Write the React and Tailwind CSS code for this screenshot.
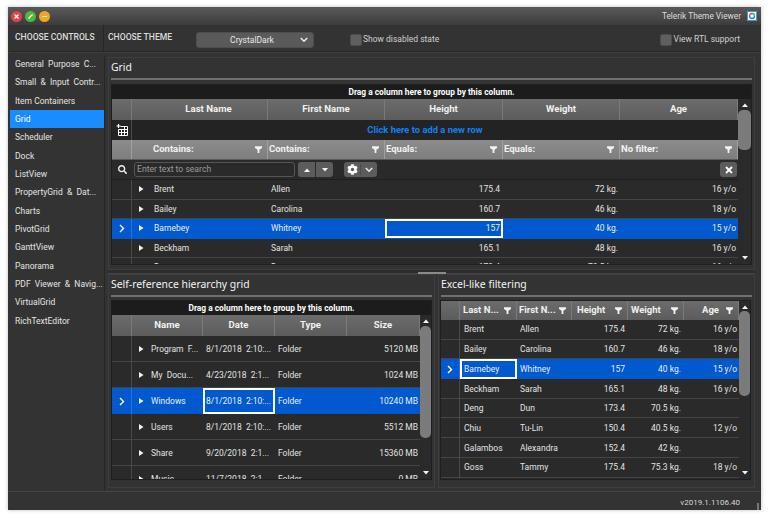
import React from "react";
import { FaCog, FaSearch } from "react-icons/fa";

const Funnel = () => (
  <svg width="7" height="7" viewBox="0 0 7 7" className="shrink-0"><path d="M0 .3h7v1.7L4.4 3.8V7H2.6V3.8L0 2z" fill="#f2f2f2" /></svg>
);
const Tri = ({ dir = "right", size = 6 }) => (
  <svg width={size} height={size} viewBox="0 0 6 6" className="shrink-0">
    {dir === "right" && <path d="M1 0l4.5 3L1 6z" fill="#f4f4f4" />}
    {dir === "up" && <path d="M0 5l3-3.5L6 5z" fill="#f4f4f4" />}
    {dir === "down" && <path d="M0 1l3 3.5L6 1z" fill="#f4f4f4" />}
  </svg>
);
const Chevron = ({ className = "" }) => (
  <svg width="8" height="6" viewBox="0 0 8 6" className={className}><path d="M.8 1l3.2 3.2L7.2 1" stroke="#e8e8e8" strokeWidth="1.6" fill="none" /></svg>
);
const RowArrow = () => (
  <svg width="6" height="9" viewBox="0 0 6 9"><path d="M1 1l3.5 3.5L1 8" stroke="#fff" strokeWidth="1.4" fill="none" /></svg>
);
const TableIcon = () => (
  <svg width="12" height="12" viewBox="0 0 12 12">
    <path d="M2.5 0v4M.5 2h4" stroke="#fff" strokeWidth="1.2" />
    <path d="M4.5 2.5h7v9h-9v-6h9M5.5 5.5v6M8.5 2.5v9M2.5 8.5h9" stroke="#fff" strokeWidth="1" fill="none" />
  </svg>
);

const Scroll = ({ thumbTop, thumbH }) => (
  <div className="flex-1 min-w-0 bg-[#2a2a2a] relative flex flex-col items-center justify-between py-[3px]">
    <Tri dir="up" />
    <Tri dir="down" />
    <div className="absolute left-0 right-0 rounded-[5px] bg-[#7b7b7b]" style={{ top: thumbTop, height: thumbH }} />
  </div>
);

const Panel = ({ title, className = "", compact, children }) => (
  <section className={"flex flex-col bg-[#333333] border border-[#3e3e3e] " + className}>
    <h2 className="h-[20px] pl-[2px] pt-[1px] text-[10.4px] leading-[16px] font-normal text-[#f4f4f4] [font-family:'Noto_Sans',sans-serif] whitespace-nowrap">{title}</h2>
    <div className={"h-[2px] mx-[2px] bg-[#707070] " + (compact ? "mb-[3px]" : "mb-[4px]")} />
    {children}
  </section>
);

const GroupBar = () => (
  <div className="h-[14px] shrink-0 bg-[#1c1c1c] text-center text-white font-bold text-[8.4px] leading-[14px]">Drag a column here to group by this column.</div>
);

const cellBase = "flex items-center min-w-0 whitespace-nowrap overflow-hidden";

const top = "grid grid-cols-[20px_136px_117px_118px_117px_118px]";
const left = "grid grid-cols-[20px_71px_72px_72px_73px]";
const right = "grid grid-cols-[19px_57px_55px_56px_56px_55px]";

const HeadCell = ({ children, indent }) => (
  <div className={cellBase + " justify-center font-bold text-[9.6px] text-[#f0f0f0] border-r border-[#7a7a7a] " + (indent ? "pl-[18px]" : "")}>{children}</div>
);

const DataCell = ({ children, align = "left", sel, pl = "pl-[3px]", pr = "pr-[2px]" }) => (
  <div className={cellBase + " " + (align === "right" ? "justify-end " + pr : pl) + (sel ? " border-2 border-white" : "")}>{children}</div>
);

const Indicator = ({ selected }) => (
  <div className={"flex items-center justify-center border-r " + (selected ? "border-[#2b72d6]" : "border-[#4a4a4a]")}>
    {selected && <RowArrow />}
  </div>
);

const topRows = [
  ["Brent", "Allen", "175.4", "72 kg.", "16 y/o"],
  ["Bailey", "Carolina", "160.7", "46 kg.", "18 y/o"],
  ["Barnebey", "Whitney", "157", "40 kg.", "15 y/o"],
  ["Beckham", "Sarah", "165.1", "48 kg.", "16 y/o"],
  ["Deng", "Dun", "173.4", "70.5 kg.", "16 y/o"],
];

const leftRows = [
  ["Program  F...", "8/1/2018  2:10:...", "Folder", "5120 MB"],
  ["My  Docu...", "4/23/2018  2:1...", "Folder", "1024 MB"],
  ["Windows", "8/1/2018  2:10:...", "Folder", "10240 MB"],
  ["Users", "8/1/2018  2:10:...", "Folder", "5512 MB"],
  ["Share", "9/20/2018  2:1...", "Folder", "15360 MB"],
  ["Music", "11/7/2018  2:1...", "Folder", "0 MB"],
];

const rightRows = [
  ["Brent", "Allen", "175.4", "72 kg.", "16 y/o"],
  ["Bailey", "Carolina", "160.7", "46 kg.", "18 y/o"],
  ["Barnebey", "Whitney", "157", "40 kg.", "15 y/o"],
  ["Beckham", "Sarah", "165.1", "48 kg.", "16 y/o"],
  ["Deng", "Dun", "173.4", "70.5 kg.", ""],
  ["Chiu", "Tu-Lin", "150.4", "40.5 kg.", "12 y/o"],
  ["Galambos", "Alexandra", "152.4", "42 kg.", ""],
  ["Goss", "Tammy", "175.4", "75.3 kg.", "18 y/o"],
];

const sideItems = ["General  Purpose  C...", "Small  &  Input  Contr...", "Item Containers", "Grid", "Scheduler", "Dock", "ListView", "PropertyGrid  &  Dat...", "Charts", "PivotGrid", "GanttView", "Panorama", "PDF  Viewer  &  Navig...", "VirtualGrid", "RichTextEditor"];

const TopGrid = () => (
  <div className="h-[181px] mx-[2px] overflow-hidden border border-[#1f1f1f] bg-[#2a2a2a] flex flex-col">
    <GroupBar />
    <div className="flex flex-1 min-h-0">
      <div className="w-[626px] shrink-0 flex flex-col overflow-hidden">
        <div className={top + " h-[21px] shrink-0 bg-gradient-to-b from-[#6c6c6c] to-[#5c5c5c]"}>
          <div className="border-r border-[#7a7a7a]" />
          {["Last Name", "First Name", "Height", "Weight", "Age"].map((h, i) => <HeadCell key={h} indent={i === 0}>{h}</HeadCell>)}
        </div>
        <div className="relative h-[20px] shrink-0 bg-[#232323] text-center font-bold text-[9.4px] leading-[20px] text-[#0f82f2]">
          <div className="absolute left-0 top-0 bottom-0 w-[20px] flex items-center justify-center border-r border-[#4a4a4a]"><TableIcon /></div>
          Click here to add a new row
        </div>
        <div className={top + " h-[20px] shrink-0 bg-gradient-to-b from-[#8c8c8c] to-[#7e7e7e] border-b border-[#5a5a5a]"}>
          <div className="border-r border-[#a0a0a0]" />
          {["Contains:", "Contains:", "Equals:", "Equals:", "No filter:"].map((h, i) => (
            <div key={i} className={"flex items-center justify-between pr-[5px] font-bold text-[9.5px] text-[#f2f2f2] border-r border-[#a0a0a0] " + (i === 0 ? "pl-[21px]" : "pl-[1px]")}>
              <span>{h}</span><Funnel />
            </div>
          ))}
        </div>
        <div className="h-[20px] shrink-0 flex items-center bg-[#2a2a2a] border-b border-[#1e1e1e]">
          <div className="w-[20px] flex justify-center"><FaSearch className="text-[#eeeeee] text-[9px]" /></div>
          <div className="ml-[2px] w-[161px] h-[15px] rounded-[3px] border border-[#555555] bg-[#2a2a2a] text-[8.6px] leading-[13px] pl-[2px] text-[#9a9a9a]">Enter text to search</div>
          <div className="ml-[3px] flex gap-[1px]">
            <div className="w-[17px] h-[15px] rounded-l-[3px] bg-[#5c5c5c] flex items-center justify-center"><Tri dir="up" /></div>
            <div className="w-[17px] h-[15px] rounded-r-[3px] bg-[#5c5c5c] flex items-center justify-center"><Tri dir="down" /></div>
          </div>
          <div className="ml-[11px] w-[33px] h-[15px] rounded-[3px] bg-[#5c5c5c] flex items-center">
            <div className="w-[17px] flex justify-center border-r border-[#4c4c4c]"><FaCog className="text-white text-[11px]" /></div>
            <div className="flex-1 flex justify-center"><Chevron /></div>
          </div>
          <div className="ml-auto mr-[1px] w-[17px] h-[15px] rounded-[3px] bg-[#5c5c5c] flex items-center justify-center">
            <svg width="8" height="8" viewBox="0 0 8 8"><path d="M1 1l6 6M7 1L1 7" stroke="#fff" strokeWidth="1.8" /></svg>
          </div>
        </div>
        {topRows.map((r, i) => {
          const sel = i === 2;
          return (
            <div key={i} className={top + " h-[19.6px] shrink-0 text-[8.5px] border-b " + (sel ? "bg-[#0059cf] border-[#0059cf] text-[#e6effc]" : "border-[#454545] text-[#e2e2e2]")}>
              <Indicator selected={sel} />
              <div className={cellBase + " pl-[6px] gap-[10px]"}><Tri /><span>{r[0]}</span></div>
              <DataCell>{r[1]}</DataCell>
              <DataCell align="right" sel={sel} pr={sel ? "pr-[1px]" : "pr-[3px]"}>{r[2]}</DataCell>
              <DataCell align="right">{r[3]}</DataCell>
              <DataCell align="right">{r[4]}</DataCell>
            </div>
          );
        })}
      </div>
      <Scroll thumbTop={11} thumbH={40} />
    </div>
  </div>
);

const LeftGrid = () => (
  <div className="h-[180px] mx-[2px] overflow-hidden border border-[#1f1f1f] bg-[#2a2a2a] flex flex-col">
    <GroupBar />
    <div className="flex flex-1 min-h-0">
      <div className="w-[308px] shrink-0 flex flex-col overflow-hidden">
        <div className={left + " h-[21px] shrink-0 bg-gradient-to-b from-[#6c6c6c] to-[#5c5c5c]"}>
          <div className="border-r border-[#7a7a7a]" />
          {["Name", "Date", "Type", "Size"].map((h) => <HeadCell key={h}>{h}</HeadCell>)}
        </div>
        {leftRows.map((r, i) => {
          const sel = i === 2;
          return (
            <div key={i} className={left + " h-[26px] shrink-0 text-[8.5px] " + (sel ? "bg-[#0059cf] text-[#e6effc]" : "shadow-[inset_0_-1px_0_#454545] text-[#e2e2e2]")}>
              <Indicator selected={sel} />
              <div className={cellBase + " pl-[6px] gap-[7px] whitespace-pre"}><Tri /><span>{r[0]}</span></div>
              <DataCell sel={sel} pl={sel ? "pl-[1px]" : "pl-[3px]"}><span className="whitespace-pre">{r[1]}</span></DataCell>
              <DataCell>{r[2]}</DataCell>
              <DataCell align="right">{r[3]}</DataCell>
            </div>
          );
        })}
      </div>
      <Scroll thumbTop={11} thumbH={112} />
    </div>
  </div>
);

const RightGrid = () => (
  <div className="h-[180px] ml-[1px] mr-[3px] overflow-hidden border border-[#1f1f1f] bg-[#2a2a2a] flex">
    <div className="w-[298px] shrink-0 flex flex-col overflow-hidden">
      <div className={right + " h-[19px] shrink-0 bg-gradient-to-b from-[#6c6c6c] to-[#5c5c5c]"}>
        <div className="border-r border-[#7a7a7a]" />
        {["Last N...", "First N...", "Height", "Weight", "Age"].map((h, i) => (
          <div key={h} className={"flex items-center font-bold text-[9.5px] text-[#f0f0f0] whitespace-nowrap border-r border-[#7a7a7a] pr-[5px] justify-between " + (i === 0 ? "pl-[3px]" : i === 1 ? "pl-[2px]" : i === 2 ? "pl-[5px]" : i === 3 ? "pl-[3px]" : "pl-[18px]")}>
            <span>{h}</span><Funnel />
          </div>
        ))}
      </div>
      {rightRows.map((r, i) => {
        const sel = i === 2;
        return (
          <div key={i} className={right + " h-[19.7px] shrink-0 text-[8.5px] " + (sel ? "bg-[#0059cf] text-[#e6effc]" : "shadow-[inset_0_-1px_0_#454545] text-[#e2e2e2]")}>
            <Indicator selected={sel} />
            <DataCell sel={sel} pl={sel ? "pl-[2px]" : "pl-[4px]"}>{r[0]}</DataCell>
            <DataCell>{r[1]}</DataCell>
            <DataCell align="right" pr="pr-[3px]">{r[2]}</DataCell>
            <DataCell align="right" pr="pr-[3px]">{r[3]}</DataCell>
            <DataCell align="right">{r[4]}</DataCell>
          </div>
        );
      })}
      <div className={right + " h-[10px] shrink-0"}>
        <div className="border-r border-[#4a4a4a]" />
        <div className="border-r border-[#2a2a2a]" />
      </div>
    </div>
    <Scroll thumbTop={10} thumbH={85} />
  </div>
);

export default function App() {
  return (
    <div className="w-[770px] h-[521px] bg-white pt-[7px] pl-[8px] overflow-hidden [font-family:Roboto,sans-serif]">
      <div className="w-[753px] h-[503px] flex flex-col bg-[#333333] shadow-[0_0_4px_rgba(0,0,0,0.25)] overflow-hidden">
        <header className="h-[18px] shrink-0 flex items-center justify-between bg-gradient-to-b from-[#5a5a5a] to-[#3c3c3c] pl-[3px] pr-[4px]">
          <div className="flex gap-[3px]">
            <span className="w-[11px] h-[11px] rounded-full bg-[#e0404f] flex items-center justify-center">
              <svg width="5" height="5" viewBox="0 0 5 5"><path d="M.5.5l4 4M4.5.5l-4 4" stroke="#fff" strokeWidth="1.2" /></svg>
            </span>
            <span className="w-[11px] h-[11px] rounded-full bg-[#4fb93c] flex items-center justify-center">
              <svg width="5" height="5" viewBox="0 0 5 5"><path d="M.5 4.5l4-4" stroke="#fff" strokeWidth="1.4" /></svg>
            </span>
            <span className="w-[11px] h-[11px] rounded-full bg-[#f2a524] flex items-center justify-center">
              <span className="w-[5px] h-[1px] bg-[#fff2d0]" />
            </span>
          </div>
          <div className="flex items-center gap-[6px]">
            <span className="text-[8.3px] text-[#dddddd]">Telerik Theme Viewer</span>
            <svg width="10" height="10" viewBox="0 0 10 10">
              <rect width="10" height="10" fill="#3f9be8" />
              <rect x="1" y="1" width="8" height="8" fill="#f5f5f5" />
              <path d="M2.5 5a2.5 2.5 0 0 1 2.5-2.5" stroke="#d84a4a" strokeWidth="1.3" fill="none" />
              <path d="M5 2.5A2.5 2.5 0 0 1 7.5 5" stroke="#3fb05a" strokeWidth="1.3" fill="none" />
              <path d="M7.5 5a2.5 2.5 0 0 1-5 0" stroke="#2f6fd0" strokeWidth="1.3" fill="none" />
            </svg>
          </div>
        </header>

        <div className="h-[27px] shrink-0 flex mx-[2px] border-b border-[#262626] text-[#dcdcdc]">
          <div className="w-[94px] shrink-0 border-r border-[#262626] flex items-center pl-[5px] pb-[1px] text-[8.6px] font-medium whitespace-nowrap">CHOOSE CONTROLS</div>
          <div className="flex-1 flex items-center pl-[4px] pr-[19px] pt-[3px]">
            <span className="text-[8.6px] font-medium w-[88px] pb-[4px] whitespace-nowrap">CHOOSE THEME</span>
            <div className="relative w-[118px] h-[16px] rounded-[3px] bg-[#5a5a5a] border border-[#4e4e4e] text-center text-[8.5px] leading-[14px] text-[#e8e8e8]">
              <span className="pr-[6px]">CrystalDark</span>
              <Chevron className="absolute right-[5px] top-[4px]" />
            </div>
            <span className="ml-[36px] w-[12px] h-[12px] rounded-[2px] bg-[#5f5f5f] border border-[#4c4c4c]" />
            <span className="ml-[1px] text-[8.5px] text-[#d0d0d0]">Show disabled state</span>
            <span className="ml-auto w-[12px] h-[12px] rounded-[2px] bg-[#5f5f5f] border border-[#4c4c4c]" />
            <span className="ml-[2px] text-[8.5px] text-[#d0d0d0]">View RTL support</span>
          </div>
        </div>

        <div className="flex-1 min-h-0 flex pl-[2px] pt-[2px] border-t border-[#3e3e3e]">
          <nav className="w-[95px] shrink-0 text-[8.5px] text-[#e4e4e4] border-r border-[#262626]">
            {sideItems.map((s) => (
              <div key={s} className={"h-[18.33px] leading-[19px] pl-[5px] whitespace-pre overflow-hidden " + (s === "Grid" ? "bg-[#1a8cff] text-white" : "")}>{s}</div>
            ))}
          </nav>
          <main className="flex-1 min-w-0 pl-[3px] flex flex-col">
            <Panel title="Grid" className="h-[213px] mt-[2px] mr-[6px]">
              <TopGrid />
            </Panel>
            <div className="h-[4px] relative bg-[#2c2c2c] border-b border-[#444444] mr-[6px]">
              <div className="absolute left-[310px] top-[2px] w-[28px] h-[2px] bg-[#8a8a8a]" />
            </div>
            <div className="flex gap-[3px]">
              <Panel compact title="Self-reference hierarchy grid" className="w-[327px] h-[214px]">
                <LeftGrid />
              </Panel>
              <Panel compact title="Excel-like filtering" className="w-[317px] h-[214px]">
                <RightGrid />
              </Panel>
            </div>
          </main>
        </div>

        <footer className="relative h-[19px] shrink-0 bg-[#333333] border-t border-[#454545] flex items-center justify-end pr-[21px] pt-[4px] text-[8px] text-[#d8d8d8]">
          v2019.1.1106.40
          <span className="absolute right-[2px] bottom-0 w-[2px] h-[7px] bg-[#777777]" />
        </footer>
      </div>
    </div>
  );
}
